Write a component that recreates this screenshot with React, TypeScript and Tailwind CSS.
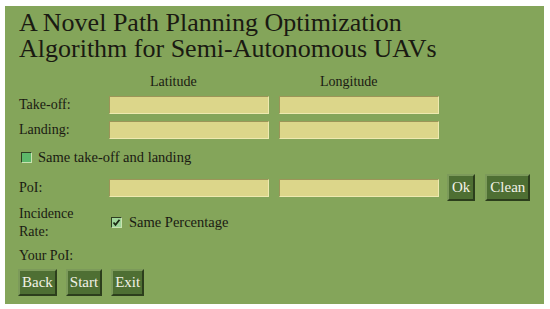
import React from "react";

const serif = { fontFamily: '"Liberation Serif", "DejaVu Serif", serif' };

function Field() {
  return (
    <div className="h-[18px] w-[160px] shrink-0 bg-[#dcd68a] border border-t-[#9c9558] border-l-[#9c9558] border-b-[#eee9b0] border-r-[#eee9b0]" />
  );
}

function Btn({ label, tight }: { label: string; tight?: boolean }) {
  return (
    <button
      className={
        "h-[27px] bg-[#4e6f33] text-[#f2f2e6] text-[15px] border-2 border-t-[#7c9a5a] border-l-[#7c9a5a] border-b-[#2c3e1c] border-r-[#2c3e1c] leading-none " +
        (tight ? "px-[2px]" : "px-[3px]")
      }
    >
      {label}
    </button>
  );
}

function Check({ checked }: { checked?: boolean }) {
  return (
    <span
      className={
        "inline-flex items-center justify-center w-[11px] h-[11px] border border-t-[#2f3f22] border-l-[#2f3f22] border-b-[#c9e3b0] border-r-[#c9e3b0] " +
        (checked ? "bg-[#9fd69a]" : "bg-[#5db86a]")
      }
    >
      {checked && (
        <svg width="9" height="9" viewBox="0 0 9 9">
          <path d="M1.5 4.5 L3.5 6.8 L7.5 1.8" stroke="#1c2a14" strokeWidth="1.8" fill="none" />
        </svg>
      )}
    </span>
  );
}

export default function App() {
  return (
    <div className="w-[550px] h-[309px] bg-white pt-[6px] pl-[5px]" style={serif}>
      <div className="w-[539px] h-[298px] bg-[#84a55a] pl-[14px] text-[#1a1a12] text-[14px] leading-[18px]">
        <h1 className="text-[26px] leading-[26px] pt-[4px]">
          A Novel Path Planning Optimization
          <br />
          Algorithm for Semi-Autonomous UAVs
        </h1>

        <div className="flex mt-[11px]">
          <div className="w-[131px]" />
          <div className="w-[170px]">Latitude</div>
          <div>Longitude</div>
        </div>

        <div className="flex items-center mt-[5px] gap-[10px]">
          <div className="w-[80px]">Take-off:</div>
          <Field />
          <Field />
        </div>
        <div className="flex items-center mt-[7px] gap-[10px]">
          <div className="w-[80px]">Landing:</div>
          <Field />
          <Field />
        </div>

        <div className="flex items-center mt-[9px] gap-[6px] pl-[2px]">
          <Check />
          <span className="text-[14.5px]">Same take-off and landing</span>
        </div>

        <div className="flex items-center mt-[8px] gap-[10px]">
          <div className="w-[80px]">PoI:</div>
          <Field />
          <Field />
          <div className="flex gap-[10px] ml-[-2px]">
            <Btn label="Ok" />
            <Btn label="Clean" />
          </div>
        </div>

        <div className="flex items-start mt-[4px]">
          <div className="w-[92px]">
            Incidence
            <br />
            Rate:
          </div>
          <div className="flex items-center gap-[7px] mt-[8px]">
            <Check checked />
            <span className="text-[14.5px]">Same Percentage</span>
          </div>
        </div>

        <div className="mt-[6px]">Your PoI:</div>

        <div className="flex gap-[9px] mt-[4px] ml-[-1px]">
          <Btn label="Back" tight />
          <Btn label="Start" tight />
          <Btn label="Exit" tight />
        </div>
      </div>
    </div>
  );
}
